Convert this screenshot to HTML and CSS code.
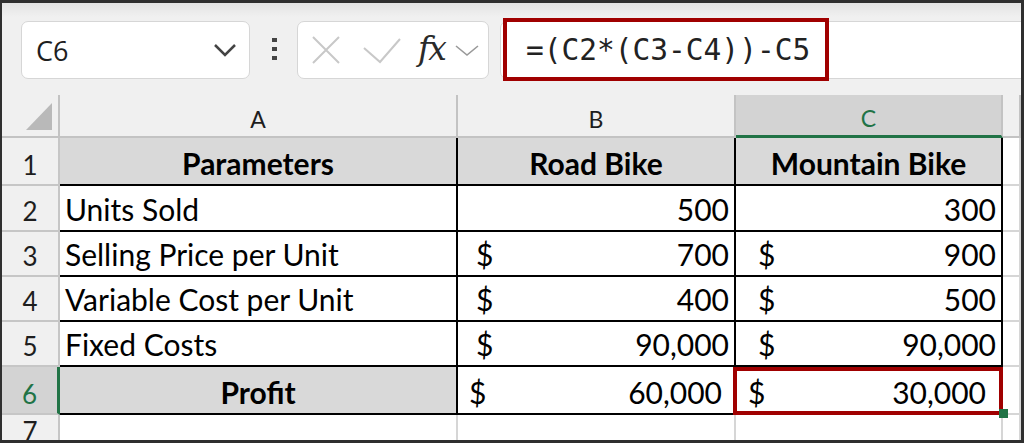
FILE: index.html
```html
<!DOCTYPE html>
<html lang="en">
    <head>
        <meta charset="UTF-8" />
        <meta name="viewport" content="width=device-width, initial-scale=1.0" />
        <title>Profit formula</title>
        <link rel="stylesheet" href="styles.css">
    </head>

    <body>
        <div class="frame">
            <!-- Formula bar -->
            <div class="toolbar">
                <div class="name-box">
                    <span>C6</span>
                    <svg width="24" height="14" viewBox="0 0 24 14">
                        <polyline points="2,2 12,12 22,2" fill="none" stroke="#444" stroke-width="2.5" />
                    </svg>
                </div>
                <svg class="more" width="5" height="58" viewBox="0 0 5 58">
                    <rect x="0" y="17" width="5" height="4" fill="#444" />
                    <rect x="0" y="26" width="5" height="4" fill="#444" />
                    <rect x="0" y="35" width="5" height="4" fill="#444" />
                </svg>
                <div class="fx-box">
                    <svg class="cancel" width="28" height="28" viewBox="0 0 28 28">
                        <path d="M1 1 L27 27 M27 1 L1 27" stroke="#c8c8c8" stroke-width="2" />
                    </svg>
                    <svg class="enter" width="38" height="26" viewBox="0 0 38 26">
                        <polyline points="1,10 17,24 37,1" fill="none" stroke="#c8c8c8" stroke-width="2" />
                    </svg>
                    <span class="fx">fx</span>
                    <svg class="fx-more" width="24" height="12" viewBox="0 0 24 12">
                        <polyline points="1,1 12,10 23,1" fill="none" stroke="#999" stroke-width="1.6" />
                    </svg>
                </div>
                <div class="formula-box">
                    <span class="formula">=(C2*(C3-C4))-C5</span>
                </div>
            </div>

            <!-- Worksheet -->
            <div class="sheet">
                <div class="c hd corner">
                    <svg width="26" height="27" viewBox="0 0 26 27">
                        <polygon points="26,0 26,27 0,27" fill="#b9b9b9" />
                    </svg>
                </div>
                <div class="c hd">A</div>
                <div class="c hd">B</div>
                <div class="c hd sel-col">C</div>
                <div class="c hd"></div>

                <div class="c rh">1</div>
                <div class="c t title">Parameters</div>
                <div class="c t title">Road Bike</div>
                <div class="c t title">Mountain Bike</div>
                <div class="c"></div>

                <div class="c rh">2</div>
                <div class="c t label">Units Sold</div>
                <div class="c t num">500</div>
                <div class="c t num">300</div>
                <div class="c"></div>

                <div class="c rh">3</div>
                <div class="c t label">Selling Price per Unit</div>
                <div class="c t acc"><span>$</span><span>700</span></div>
                <div class="c t acc acc-c"><span>$</span><span>900</span></div>
                <div class="c"></div>

                <div class="c rh">4</div>
                <div class="c t label">Variable Cost per Unit</div>
                <div class="c t acc"><span>$</span><span>400</span></div>
                <div class="c t acc acc-c"><span>$</span><span>500</span></div>
                <div class="c"></div>

                <div class="c rh">5</div>
                <div class="c t label">Fixed Costs</div>
                <div class="c t acc"><span>$</span><span>90,000</span></div>
                <div class="c t acc acc-c"><span>$</span><span>90,000</span></div>
                <div class="c"></div>

                <div class="c rh sel-row">6</div>
                <div class="c t title shade">Profit</div>
                <div class="c t acc total"><span>$</span><span>60,000</span></div>
                <div class="c t acc total total-c active">
                    <span>$</span><span>30,000</span>
                    <span class="mark"></span>
                    <span class="handle"></span>
                </div>
                <div class="c"></div>

                <div class="c rh last">7</div>
                <div class="c last"></div>
                <div class="c last"></div>
                <div class="c last"></div>
                <div class="c last"></div>
            </div>
        </div>
    </body>
</html>
```

FILE: styles.css
```css
body {
    margin: 0;
    padding: 0;
    background-color: #fff;
}

.frame {
    width: 1024px;
    height: 443px;
    box-sizing: border-box;
    border: 3px solid #2f2f2f;
    border-left-width: 2px;
    overflow: hidden;
    background-color: #f0f0f0;
}

/* formula bar */

.toolbar {
    height: 92px;
    box-sizing: border-box;
    padding: 18px 0 0 19px;
    display: flex;
    align-items: flex-start;
    background: linear-gradient(#e3e3e3, #f0f0f0 14px);
}

.name-box,
.fx-box,
.formula-box {
    height: 58px;
    box-sizing: border-box;
    background-color: #fff;
    border: 1px solid #d6d6d6;
    border-radius: 7px;
    display: flex;
    align-items: center;
}

.name-box {
    width: 229px;
    padding: 0 12px 0 14px;
    justify-content: space-between;
    font-family: "Open Sans", sans-serif;
    font-size: 27px;
    color: #1e1e1e;
}

.more {
    margin-left: 22px;
}

.fx-box {
    width: 192px;
    margin-left: 20px;
    padding-left: 14px;
}

.enter {
    margin-left: 23px;
    margin-top: 2px;
}

.fx {
    margin-left: 17px;
    font-family: "DejaVu Serif", serif;
    font-style: italic;
    font-size: 33px;
    letter-spacing: -2px;
    color: #2a2a2a;
    line-height: 1;
    margin-top: -4px;
}

.fx-more {
    margin-left: 10px;
    margin-top: 2px;
}

.formula-box {
    flex: 1;
    margin-left: 11px;
    margin-right: -10px;
    align-items: flex-start;
}

.formula {
    width: 326px;
    height: 63px;
    box-sizing: border-box;
    margin: -4px 0 0 2px;
    padding-left: 19px;
    border: 4px solid #a00000;
    display: flex;
    align-items: center;
    font-family: "DejaVu Sans Mono", monospace;
    font-size: 29.5px;
    color: #222;
}

/* worksheet grid */

.sheet {
    display: grid;
    grid-template-columns: 58px 398px 278px 267px 1fr;
    grid-template-rows: 43px 48px 46px 45px 45px 45px 48px 1fr;
    height: 345px;
    background-color: #fff;
    font-family: "Lato", sans-serif;
    font-size: 30px;
    color: #000;
}

.c {
    box-sizing: border-box;
    border-right: 2px solid #d6d6d6;
    border-bottom: 2px solid #d6d6d6;
    display: flex;
    align-items: flex-end;
    padding-bottom: 3px;
    white-space: nowrap;
    min-width: 0;
}

.hd {
    background-color: #f0f0f0;
    border-color: #c3c3c3;
    justify-content: center;
    font-size: 23px;
    color: #1e1e1e;
    padding-bottom: 3px;
}

.corner {
    justify-content: flex-end;
    padding: 0 6px 6px 0;
}

.sel-col {
    background-color: #d3d3d3;
    border-bottom: 3px solid #217346;
    color: #217346;
}

.rh {
    background-color: #f0f0f0;
    border-color: #c6c6c6;
    justify-content: center;
    font-size: 26px;
    color: #1e1e1e;
    padding-bottom: 3px;
}

.sel-row {
    background-color: #d3d3d3;
    border-right: 3px solid #217346;
    color: #217346;
}

.t {
    border-color: #000;
}

.title {
    background-color: #d9d9d9;
    justify-content: center;
    font-weight: bold;
}

.shade {
    background-color: #d9d9d9;
}

.label {
    padding-left: 5px;
}

.num {
    justify-content: flex-end;
    padding-right: 5px;
}

.acc {
    justify-content: space-between;
    padding: 0 5px 3px 18px;
}

.acc-c {
    padding-left: 22px;
}

.total {
    padding: 0 12px 3px 11px;
}

.total-c {
    padding: 0 15px 3px 12px;
}

.active {
    position: relative;
}

/* red annotation box and fill handle */
.mark {
    position: absolute;
    left: -3px;
    top: 0;
    right: -2px;
    bottom: -2px;
    border: 4px solid #a00000;
}

.handle {
    position: absolute;
    right: -7px;
    bottom: -5px;
    width: 9px;
    height: 9px;
    background-color: #217346;
}

.last {
    border-bottom: none;
}
```
